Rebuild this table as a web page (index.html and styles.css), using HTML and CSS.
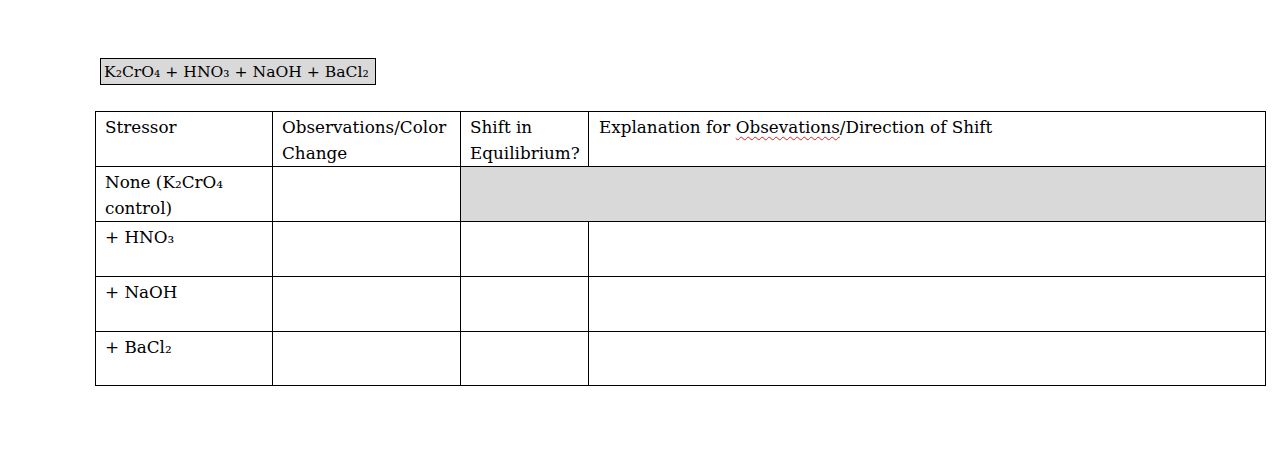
FILE: index.html
```html
<!DOCTYPE html>
<html>
<head>
<meta charset="utf-8">
<link rel="stylesheet" href="styles.css">
</head>
<body>
<div class="page">
  <div class="title">K₂CrO₄ + HNO₃ + NaOH + BaCl₂</div>
  <table class="grid">
    <colgroup>
      <col class="c1"><col class="c2"><col class="c3"><col class="c4">
    </colgroup>
    <tr>
      <td>Stressor</td>
      <td>Observations/Color Change</td>
      <td>Shift in Equilibrium?</td>
      <td class="wide">Explanation for <span class="spell">Obsevations</span>/Direction of Shift</td>
    </tr>
    <tr>
      <td>None (K₂CrO₄ control)</td>
      <td></td>
      <td class="shade" colspan="2"></td>
    </tr>
    <tr>
      <td>+ HNO₃</td><td></td><td></td><td></td>
    </tr>
    <tr>
      <td>+ NaOH</td><td></td><td></td><td></td>
    </tr>
    <tr class="last">
      <td>+ BaCl₂</td><td></td><td></td><td></td>
    </tr>
  </table>
</div>
</body>
</html>
```

FILE: styles.css
```css
html, body {
  margin: 0;
  padding: 0;
  background: #ffffff;
}
body {
  font-family: "DejaVu Serif", "Liberation Serif", serif;
  font-size: 16.8px;
  color: #000;
}
.page {
  padding: 58px 0 0 95px;
}
.title {
  display: inline-block;
  margin-left: 5px;
  border: 1px solid #000;
  background: #d9d9d9;
  padding: 0 6px 0 3px;
  height: 25px;
  line-height: 27px;
  font-size: 15.6px;
  white-space: nowrap;
}
.grid {
  margin-top: 26px;
  border-collapse: collapse;
  table-layout: fixed;
  width: 1170px;
}
.c1 { width: 177px; }
.c2 { width: 188px; }
.c3 { width: 128px; }
.c4 { width: 677px; }
.grid td {
  border: 1px solid #000;
  height: 55px;
  padding: 2px 4px 0 9px;
  vertical-align: top;
  line-height: 26px;
  box-sizing: border-box;
}
.grid tr.last td { height: 54px; }
.grid td.wide { padding-left: 10px; }
.grid td.shade { background: #d9d9d9; }
.spell {
  text-decoration: underline wavy #e02020;
  text-decoration-thickness: 1px;
  text-underline-offset: 3px;
}
```
